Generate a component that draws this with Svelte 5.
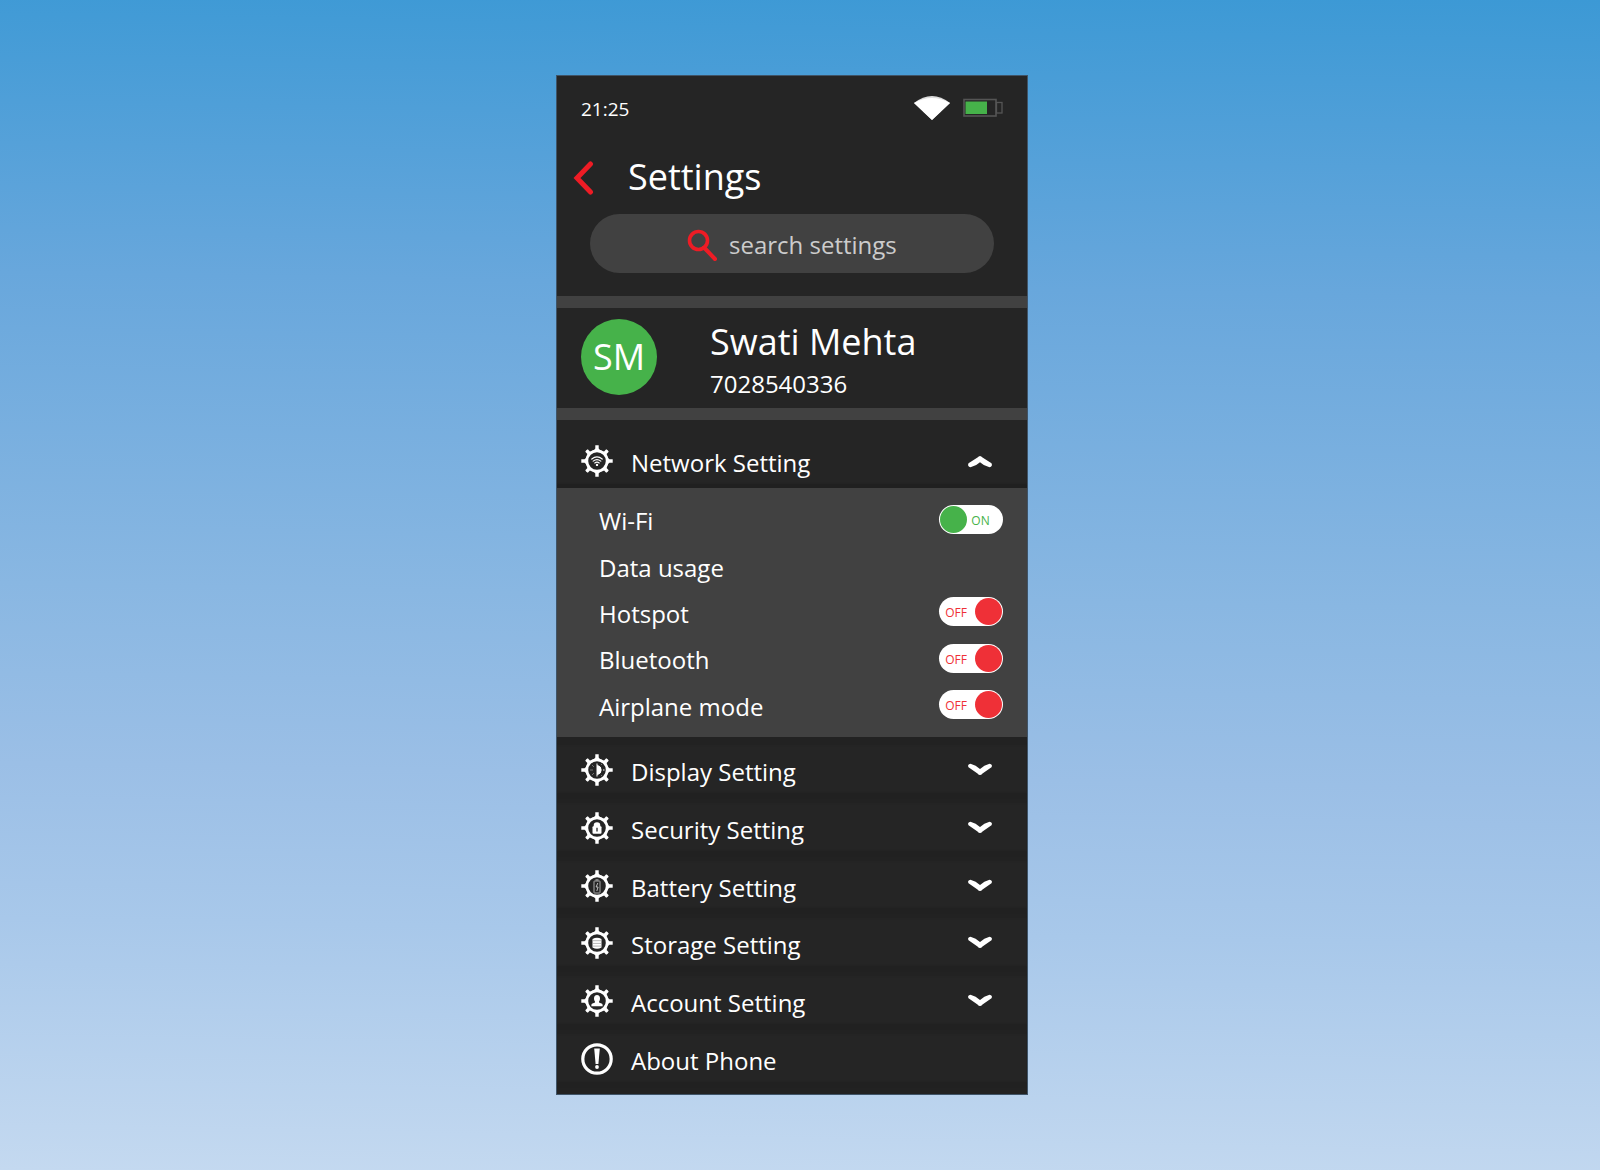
<script>
  let network = $state([
    { name: 'Wi-Fi', toggle: true, on: true },
    { name: 'Data usage', toggle: false, on: false },
    { name: 'Hotspot', toggle: true, on: false },
    { name: 'Bluetooth', toggle: true, on: false },
    { name: 'Airplane mode', toggle: true, on: false }
  ]);
  let open = $state(true);
  const sections = [
    { name: 'Display Setting', icon: 'display' },
    { name: 'Security Setting', icon: 'security' },
    { name: 'Battery Setting', icon: 'battery' },
    { name: 'Storage Setting', icon: 'storage' },
    { name: 'Account Setting', icon: 'account' },
    { name: 'About Phone', icon: 'about' }
  ];
  const teeth = [0, 45, 90, 135, 180, 225, 270, 315];
</script>

{#snippet icon(kind)}
  <svg class="icon" viewBox="0 0 32 32" aria-hidden="true">
    {#if kind === 'about'}
      <circle cx="16" cy="16" r="14.2" fill="none" stroke="#fff" stroke-width="3.2" />
      <path d="M13.200 5.500h5.600l-1.400 15.500h-2.800z" fill="#fff" />
      <circle cx="16" cy="24" r="1.900" fill="#fff" />
    {:else}
      {#each teeth as t}
        <path
          d={t % 90 === 0 ? 'M12 6.500L14.300 3.500V.3h3.400V3.500l2.300 3z' : 'M12.500 6.500L14.200 4.200V1.200q1.800-.8 3.600 0V4.200l1.700 2.300z'}
          transform="rotate({t} 16 16)"
          fill="#fff"
        />
      {/each}
      <circle cx="16" cy="16" r="10.200" fill="none" stroke="#fff" stroke-width="2.800" />
      {#if kind === 'network'}
        <g fill="none" stroke="#fff" stroke-width="1.200" stroke-linecap="round">
          <path d="M10.800 14q5.200-4.400 10.400 0M12.200 16.100q3.800-3 7.600 0M13.800 18q2.200-1.600 4.400 0" />
        </g>
        <circle cx="16" cy="19.900" r="1.200" fill="#fff" />
      {:else if kind === 'display'}
        <path d="M16 9.500v13M16.500 11.500a4.600 4.600 0 0 1 0 9z" fill="#fff" stroke="#fff" />
        <path d="M22 16h1.500" stroke="#fff" />
        <path d="M9 16h3M11 11l2 2M11 21l2-2M20 11l1-1M20 21l1 1" stroke="#888" stroke-width=".8" />
      {:else if kind === 'security'}
        <path d="M13.600 15v-1.500a2.400 2.400 0 0 1 4.800 0V15" fill="#fff" stroke="#fff" stroke-width="1.800" />
        <rect x="11.500" y="14.300" width="9" height="7.500" rx="1" fill="#fff" />
        <path d="M16 15.800v3.800" stroke="#252525" stroke-width="1.300" />
      {:else if kind === 'battery'}
        <rect x="13" y="11" width="6" height="12" rx=".5" fill="none" stroke="#aaa" />
        <path d="M14.500 9.900h3" stroke="#aaa" stroke-width="1.200" />
        <path d="M16.800 13l-1.700 4h2l-1.300 4" fill="none" stroke="#ccc" stroke-width=".9" />
      {:else if kind === 'storage'}
        <path d="M11.500 12q4.500-2.500 9 0v8.500q-4.500 2.500-9 0z" fill="#fff" />
        <path d="M11.500 13.700h9M11.500 16.400h9M11.500 19.100h9" stroke="#999" stroke-width=".7" />
      {:else if kind === 'account'}
        <ellipse cx="16" cy="13.500" rx="3" ry="3.500" fill="#fff" />
        <path d="M14 15.500h4v2l3.100 1.300q.6.500.6 2.400H10.300q0-1.900.6-2.400l3.100-1.300z" fill="#fff" />
      {/if}
    {/if}
  </svg>
{/snippet}

{#snippet chevron(up)}
  <svg class="chevron" viewBox="0 0 26 14" aria-hidden="true">
    <path
      d={up
        ? 'M1.500 9.200L10.500 3.600Q13 .4 15.500 3.600L24.500 9.200Q26 12.200 22.500 13.300Q17 12 13 8.200Q9 12 3.500 13.300Q0 12.200 1.500 9.200z'
        : 'M1.500 4.300L10.500 10.400Q13 13.600 15.500 10.400L24.500 4.300Q26 1.300 22.500 .7Q17 2 13 6Q9 2 3.500 .7Q0 1.300 1.500 4.300z'}
      fill="#fff"
    />
  </svg>
{/snippet}

<div class="page">
  <main class="phone">
    <header>
      <div class="status">
        <time>21:25</time>
        <div class="signals">
          <svg class="wifi" viewBox="0 0 38 26" aria-hidden="true">
            <path d="M1 8Q19-6 37 8L19 25z" fill="#ddd" />
            <path d="M1 8Q19-2 37 8L19 25z" fill="#fff" />
          </svg>
          <svg class="battery" viewBox="0 0 40 20" aria-hidden="true">
            <rect x="1" y="1.500" width="32" height="16.500" fill="none" stroke="#555" stroke-width="1.600" />
            <rect x="33.500" y="4.500" width="5.500" height="10.500" fill="none" stroke="#555" stroke-width="1.300" />
            <rect x="2.500" y="3.500" width="21.500" height="12.500" fill="#46b24a" />
          </svg>
        </div>
      </div>
      <div class="title">
        <button class="back" aria-label="Back">
          <svg viewBox="0 0 22 36" aria-hidden="true">
            <path d="M17.500 5L4 19L17.500 33" fill="none" stroke="#ee1c25" stroke-width="5" stroke-linecap="round" />
          </svg>
        </button>
        <h1>Settings</h1>
      </div>
      <label class="search">
        <svg viewBox="0 0 30 32" aria-hidden="true">
          <circle cx="11.500" cy="11.500" r="9" fill="none" stroke="#ee1c25" stroke-width="3.600" />
          <path d="M17 18.500L28 30" stroke="#ee1c25" stroke-width="4" stroke-linecap="round" />
        </svg>
        <input type="text" placeholder="search settings" aria-label="search settings" />
      </label>
    </header>

    <section class="profile">
      <div class="avatar">SM</div>
      <div>
        <h2>Swati Mehta</h2>
        <p>7028540336</p>
      </div>
    </section>

    <button class="row first" aria-expanded={open} onclick={() => (open = !open)}>
      {@render icon('network')}
      <span>Network Setting</span>
      {@render chevron(open)}
    </button>

    {#if open}
      <ul class="network">
        {#each network as item, i}
          <li>
            {#if item.toggle}
              <label for="net-{i}">{item.name}</label>
              <button id="net-{i}" class="switch" class:on={item.on} role="switch" aria-checked={item.on} onclick={() => (item.on = !item.on)}>
                <span class="state">{item.on ? 'ON' : 'OFF'}</span>
                <span class="knob"></span>
              </button>
            {:else}
              <span>{item.name}</span>
            {/if}
          </li>
        {/each}
      </ul>
    {/if}

    <nav class="sections">
      {#each sections as s}
        <button class="row">
          {@render icon(s.icon)}
          <span>{s.name}</span>
          {#if s.icon !== 'about'}{@render chevron(false)}{/if}
        </button>
      {/each}
    </nav>
  </main>
</div>

<style>
  :global(body) {
    margin: 0;
  }
  .page {
    box-sizing: border-box;
    min-height: 100vh;
    padding: 75px 16px 75px 0;
    display: flex;
    justify-content: center;
    align-items: flex-start;
    background: linear-gradient(181deg, #3c99d5 0%, #68a7dc 25%, #89b7e2 51%, #9bbfe6 66%, #a8c8ea 79%, #c4d9f0 100%);
    font-family: 'Open Sans', 'Noto Sans', sans-serif;
    color: #fff;
  }
  .phone {
    box-sizing: border-box;
    width: 100%;
    max-width: 472px;
    min-height: 1020px;
    display: flex;
    flex-direction: column;
    background: #252525;
    border: 1px solid #3f5468;
  }
  button {
    border: 0;
    padding: 0;
    background: none;
    font: inherit;
    color: inherit;
    text-align: left;
    cursor: pointer;
  }
  h1, h2, p, ul {
    margin: 0;
    padding: 0;
    font-weight: 400;
  }
  svg {
    display: block;
    flex: none;
  }
  .status {
    display: flex;
    justify-content: space-between;
    align-items: center;
    padding: 16px 24px 0;
    height: 32px;
    font-size: 19px;
  }
  .status time {
    padding-top: 2px;
  }
  .signals {
    display: flex;
    align-items: center;
    gap: 12px;
  }
  .wifi {
    width: 38px;
    height: 26px;
  }
  .battery {
    width: 40px;
    height: 20px;
  }
  .title {
    display: flex;
    align-items: center;
    gap: 33px;
    height: 56px;
    padding: 25px 16px 9px;
  }
  .back svg {
    width: 22px;
    height: 36px;
  }
  h1, h2, .avatar {
    font-size: 36px;
    line-height: 46px;
  }
  .search {
    display: flex;
    align-items: center;
    justify-content: center;
    gap: 12px;
    box-sizing: border-box;
    height: 59px;
    margin: 0 33px 23px;
    padding-top: 2px;
    border-radius: 30px;
    background: #414141;
  }
  .search svg {
    width: 30px;
    height: 32px;
  }
  .search input {
    width: 168px;
    padding: 0;
    border: 0;
    outline: 0;
    background: none;
    font: inherit;
    font-size: 24px;
    color: #ccc;
  }
  .search input::placeholder {
    color: #ccc;
    opacity: 1;
  }
  .profile {
    display: flex;
    align-items: flex-start;
    gap: 53px;
    box-sizing: border-box;
    height: 124px;
    padding: 11px 24px 0;
    border: solid #414141;
    border-width: 12px 0;
  }
  .avatar {
    display: grid;
    place-items: center;
    width: 76px;
    height: 76px;
    border-radius: 50%;
    background: #46b24a;
  }
  .profile p {
    font-size: 24px;
    line-height: 38px;
  }
  .row {
    display: flex;
    align-items: center;
    gap: 18px;
    width: 100%;
    padding: 0 34px 0 24px;
    font-size: 24px;
    line-height: 32px;
    background: #252525;
    box-shadow: inset 0 -7px 2px -1px #212121, inset 0 5px 2px -1px #222;
  }
  .row span {
    flex: 1;
    padding-top: 4px;
  }
  .row .icon {
    width: 32px;
    height: 32px;
  }
  .chevron {
    width: 26px;
    height: 14px;
  }
  .first {
    height: 68px;
    padding-top: 14px;
    box-shadow: inset 0 -5px 2px -1px #202020;
  }
  .network {
    list-style: none;
    display: grid;
    grid-auto-rows: 1fr;
    box-sizing: border-box;
    height: 249px;
    padding: 8px 24px 9px 42px;
    background: #414141;
    font-size: 24px;
  }
  .network li {
    display: flex;
    align-items: center;
    justify-content: space-between;
  }
  .network label, .network li > span {
    padding-top: 3px;
  }
  .switch {
    display: flex;
    align-items: center;
    box-sizing: border-box;
    width: 64px;
    height: 29px;
    padding: 1px;
    border-radius: 15px;
    background: #fff;
    color: #ef3037;
    font-size: 12px;
  }
  .state {
    flex: 1;
    padding: 2px 3px 0 0;
    text-align: center;
  }
  .knob {
    width: 27px;
    height: 27px;
    border-radius: 50%;
    background: currentColor;
  }
  .switch.on {
    flex-direction: row-reverse;
    color: #46b24a;
  }
  .on .state {
    padding-right: 8px;
  }
  .sections {
    flex: 1;
    display: grid;
    grid-auto-rows: 1fr;
    padding: 4px 0 6px;
    background: #222;
  }
</style>
